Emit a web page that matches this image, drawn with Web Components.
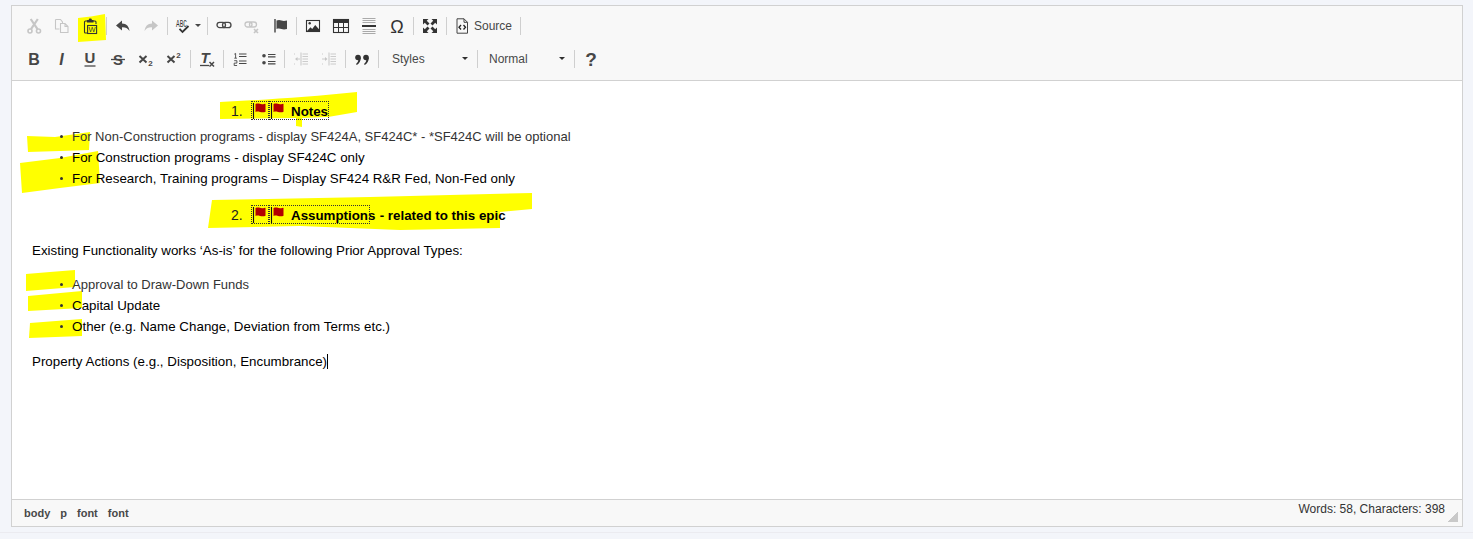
<!DOCTYPE html>
<html>
<head>
<meta charset="utf-8">
<title>Editor</title>
<style>
html, body { margin: 0; background: #f3f5fa; }
body { font-family: "Liberation Sans", Arial, sans-serif; height: 539px; overflow: hidden; }
</style>
</head>
<body>
<ck-editor>
    <ck-row slot="toolbar">
        <ck-btn icon="cut"></ck-btn>
        <ck-btn icon="copy"></ck-btn>
        <ck-btn icon="paste" marked></ck-btn>
        <ck-sep></ck-sep>
        <ck-btn icon="undo"></ck-btn>
        <ck-btn icon="redo"></ck-btn>
        <ck-sep></ck-sep>
        <ck-btn icon="spell" wide></ck-btn>
        <ck-sep></ck-sep>
        <ck-btn icon="link"></ck-btn>
        <ck-btn icon="unlink"></ck-btn>
        <ck-btn icon="anchor"></ck-btn>
        <ck-sep></ck-sep>
        <ck-btn icon="image"></ck-btn>
        <ck-btn icon="table"></ck-btn>
        <ck-btn icon="hr"></ck-btn>
        <ck-btn icon="omega"></ck-btn>
        <ck-sep></ck-sep>
        <ck-btn icon="maximize"></ck-btn>
        <ck-sep></ck-sep>
        <ck-btn icon="source" label="Source"></ck-btn>
        <ck-sep></ck-sep>
    </ck-row>
    <ck-row slot="toolbar">
        <ck-btn icon="bold"></ck-btn>
        <ck-btn icon="italic"></ck-btn>
        <ck-btn icon="underline"></ck-btn>
        <ck-btn icon="strike"></ck-btn>
        <ck-btn icon="sub"></ck-btn>
        <ck-btn icon="sup"></ck-btn>
        <ck-sep></ck-sep>
        <ck-btn icon="clear"></ck-btn>
        <ck-sep></ck-sep>
        <ck-btn icon="ol"></ck-btn>
        <ck-btn icon="ul"></ck-btn>
        <ck-sep></ck-sep>
        <ck-btn icon="outdent"></ck-btn>
        <ck-btn icon="indent"></ck-btn>
        <ck-sep></ck-sep>
        <ck-btn icon="quote"></ck-btn>
        <ck-sep></ck-sep>
        <ck-combo style="width:94px;padding-left:11px">Styles</ck-combo>
        <ck-sep></ck-sep>
        <ck-combo style="width:92px;padding-left:9px">Normal</ck-combo>
        <ck-sep></ck-sep>
        <ck-btn icon="help"></ck-btn>
    </ck-row>

    <ck-content slot="content">
        <ck-list ordered start="1" indent="220" style="margin-bottom:4px"><li><b><ck-anchor></ck-anchor><ck-anchor boxed>Notes</ck-anchor></b></li></ck-list>
        <ck-list indent="40" style="margin-bottom:16px">
            <li class="grey">For Non-Construction programs - display SF424A, SF424C* - *SF424C will be optional</li>
            <li>For Construction programs - display SF424C only</li>
            <li>For Research, Training programs – Display SF424 R&amp;R Fed, Non-Fed only</li>
        </ck-list>
        <ck-list ordered start="2" indent="220" style="margin-bottom:14px"><li><b><ck-anchor></ck-anchor><ck-anchor boxed style="--box-width:99px;--box-after:7px">Assumptions</ck-anchor> - related to this epic</b></li></ck-list>
        <ck-para style="margin-bottom:13px;letter-spacing:.015px">Existing Functionality works ‘As-is’ for the following Prior Approval Types:</ck-para>
        <ck-list indent="40" style="margin-bottom:14px">
            <li class="grey">Approval to Draw-Down Funds</li>
            <li>Capital Update</li>
            <li style="letter-spacing:.04px">Other (e.g. Name Change, Deviation from Terms etc.)</li>
        </ck-list>
        <ck-para caret style="letter-spacing:.02px">Property Actions (e.g., Disposition, Encumbrance)</ck-para>
    </ck-content>

    <ck-path slot="footer">body</ck-path>
    <ck-path slot="footer">p</ck-path>
    <ck-path slot="footer">font</ck-path>
    <ck-path slot="footer">font</ck-path>
    <span slot="count">Words: 58, Characters: 398</span>
</ck-editor>
<ck-rule></ck-rule>

<script>
//! Toolbar icons, all drawn on a 16 x 16 box
const ON = '#474747';
const OFF = '#c6c6c6';
const FONT = 'font-family="Liberation Sans" text-anchor="middle"';
const ICONS = {
    cut: `<g fill="none" stroke="${OFF}"><circle cx="4" cy="13" r="2" stroke-width="1.6"/><circle cx="12.500" cy="13" r="2" stroke-width="1.6"/><path d="M5 11.200 11.800 1M11.500 11.200 4.700 1" stroke-width="2.200"/></g>`,
    copy: `<g fill="none" stroke="${OFF}" stroke-width="1.100"><path d="M1.500 1.500h5l2 2.500v1.500M1.500 1.500v9.500h4"/><path d="M6.500 5.500h4.500l3 3v6h-7.500zM11 5.500v3h3"/></g>`,
    paste: `<g fill="none" stroke="#333" stroke-width="1.100"><path d="M5 3H3.500q-1 0-1 1v10q0 1 1 1H5M11 3h2q1 0 1 1v2"/><path d="M5.500 4V2.500h1.500L7.700 1h1.200l.7 1.500h1.400V4z" fill="#333"/><rect x="5.600" y="7.500" width="9" height="8"/></g><text x="10.100" y="14.200" ${FONT} font-size="7.500" fill="#333">W</text>`,
    undo: `<path d="M7 2.500 1 7.500l6 5V9.400c3-.2 5.600.7 7.500 3.600C14 8.500 11.500 5.600 7 5.500z" fill="${ON}"/>`,
    redo: `<path d="M9 2.500l6 5-6 5V9.400c-3-.2-5.600.7-7.500 3.600C2 8.500 4.500 5.600 9 5.500z" fill="${OFF}"/>`,
    link: `<g fill="none" stroke="${ON}" stroke-width="1.300"><rect x="1" y="4.300" width="8.500" height="5.400" rx="2.700"/><rect x="6.500" y="4.300" width="8.500" height="5.400" rx="2.700"/></g>`,
    unlink: `<g fill="none" stroke="${OFF}" stroke-width="1.300"><rect x="1" y="4" width="7" height="5" rx="2.500"/><rect x="5.500" y="4" width="7" height="5" rx="2.500"/></g><path d="M10 11l4 4m0-4-4 4" stroke="${OFF}" stroke-width="1.600"/>`,
    anchor: `<path d="M3 1v13.500" stroke="#222" stroke-width="1.200"/><path d="M4.500 2.500c2-.8 3.500-.6 5 0s3.500.5 5.500 0v8.500c-2 .5-4 .5-5.500 0s-3-.8-5 0z" fill="${ON}"/>`,
    image: `<rect x="1.500" y="2.500" width="13" height="11" fill="none" stroke="#333" stroke-width="1.100"/><circle cx="4.700" cy="5.300" r="1.200" fill="#333"/><path d="M2 13 5.500 9.300l1.700 1.700 3-4 4 4.500V13z" fill="#333"/>`,
    table: `<rect x=".5" y="1.500" width="15" height="13" fill="none" stroke="#333" stroke-width="1.100"/><rect x=".5" y="1.500" width="15" height="3.500" fill="#333"/><path d="M.5 9.500h15M5.500 5v9.500M10.500 5v9.500" stroke="#333" stroke-width="1"/>`,
    hr: `<path d="M1.500 .5h13M1.500 2.500h13M1.500 4.500h13M1.500 11.500h13M1.500 13.500h13M1.500 15.500h13" stroke="#aaa" stroke-width="1"/><path d="M1 8h14" stroke="#333" stroke-width="2"/>`,
    omega: `<text x="8" y="14.500" ${FONT} font-size="18" fill="#333">Ω</text>`,
    maximize: `<path d="M1 1h5.500L4.700 2.800 7.500 5.500 5.500 7.500 2.800 4.700 1 6.500zM15 1v5.500l-1.800-1.800L10.500 7.500 8.500 5.500l2.700-2.700L9.500 1zM1 15V9.500l1.800 1.800 2.700-2.800 2 2-2.700 2.700L6.500 15zM15 15H9.500l1.800-1.800-2.800-2.700 2-2 2.700 2.700L15 9.500z" fill="#333"/>`,
    source: `<path d="M3 .8h7l3.500 3.500v10.900H3zM10 .8v3.500h3.500" fill="none" stroke="#444" stroke-width="1"/><path d="M7 7 5 9.300 7 11.500M9.500 7l2 2.300-2 2.200" fill="none" stroke="#222" stroke-width="1.300"/>`,
    bold: `<text x="8" y="13.500" ${FONT} font-weight="700" font-size="16" fill="${ON}">B</text>`,
    italic: `<text x="7.500" y="13.500" ${FONT} font-weight="700" font-style="italic" font-size="16" fill="${ON}">I</text>`,
    underline: `<text x="8" y="12" ${FONT} font-weight="700" font-size="15" fill="${ON}">U</text><path d="M2.500 15h11" stroke="${ON}" stroke-width="1.300"/>`,
    strike: `<text x="8" y="13.500" ${FONT} font-weight="700" font-size="15" fill="${ON}">S</text><path d="M1 8.500h14" stroke="${ON}" stroke-width="1.300"/>`,
    sub: `<path d="M1.500 5 8.500 11.500M8.500 5l-7 6.500" stroke="${ON}" stroke-width="2"/><text x="12.500" y="14.500" ${FONT} font-weight="700" font-size="8" fill="${ON}">2</text>`,
    sup: `<path d="M1.500 5 8.500 11.500M8.500 5l-7 6.500" stroke="${ON}" stroke-width="2"/><text x="12.500" y="7" ${FONT} font-weight="700" font-size="8" fill="${ON}">2</text>`,
    clear: `<text x="6" y="12" ${FONT} font-weight="700" font-style="italic" font-size="15" fill="${ON}">T</text><path d="M1 14.500h9" stroke="${ON}" stroke-width="1.300"/><path d="M10.500 11l4.500 4.500M15 11l-4.500 4.500" stroke="${ON}" stroke-width="1.500"/>`,
    ol: `<path d="M2.300 3.200 3.600 2.400V7M2.300 7.200h2.600M2.200 9.700h2.700v2.400H2.200v2.400h2.900" fill="none" stroke="${ON}" stroke-width=".9"/><path d="M7 3h7.500M7 5.500h7.500M7 10h7.500M7 12.500h7.500" stroke="${ON}" stroke-width="1.200"/>`,
    ul: `<circle cx="4" cy="4.700" r="1.800" fill="${ON}"/><circle cx="4" cy="11.700" r="1.800" fill="${ON}"/><path d="M8 3.500h7.500M8 5.800h7.500M8 10.500h7.500M8 12.800h7.500" stroke="${ON}" stroke-width="1.200"/>`,
    outdent: `<path d="M8 1.500v13" stroke="${OFF}"/><path d="M9.500 3h5.500M9.500 5.500h5.500M9.500 8h5.500M9.500 10.500h5.500M9.500 13h5.500M1 3h1M1 13h1M4 8h3" stroke="${OFF}" stroke-width=".9"/><path d="M2 8l2.500-2v4z" fill="${OFF}"/>`,
    indent: `<path d="M8 1.500v13" stroke="${OFF}"/><path d="M9.500 3h5.500M9.500 5.500h5.500M9.500 8h5.500M9.500 10.500h5.500M9.500 13h5.500M1 3h1M1 13h1M1 8h3" stroke="${OFF}" stroke-width=".9"/><path d="M6.500 8 4 6v4z" fill="${OFF}"/>`,
    quote: `<g fill="#333"><circle cx="4" cy="6.500" r="2.800"/><circle cx="12" cy="6.500" r="2.800"/><path d="M6.800 6.500c0 3.500-1.500 6-4 7.500l-.8-1c1.500-1.200 2.300-2.700 2.300-4.500zM14.800 6.500c0 3.500-1.500 6-4 7.500l-.8-1c1.500-1.200 2.300-2.700 2.300-4.500z"/></g>`,
    help: `<text x="8" y="14.800" ${FONT} font-weight="700" font-size="19" fill="${ON}">?</text>`,
    spell: `<text x="1" y="9" font-family="Liberation Mono" font-size="10.500" textLength="11" lengthAdjust="spacingAndGlyphs" fill="#333">ABC</text><path d="M4.500 10.800 7.500 14 13.500 8" fill="none" stroke="#333" stroke-width="1.800"/>`
};

//! Custom element registry helper, every element gets an open shadow root
function shadowElement(name, markup, setup) {
    customElements.define(name, class extends HTMLElement {
        constructor() {
            super();
            this.attachShadow({ mode: 'open' }).innerHTML = markup;
        }
        connectedCallback() {
            if (setup) setup(this);
        }
    });
}

shadowElement('ck-editor', `
<style>
:host { display: flex; flex-direction: column; margin: 5px 10px 0 11px; box-sizing: border-box; height: 522px; border: 1px solid #d1d1d1; background: #f8f8f8; color: #000; }
.toolbar { display: flex; flex-direction: column; padding: 3px 0 5px 8px; height: 66px; border-bottom: 1px solid #d1d1d1; }
.content { flex: 1; min-height: 0; display: flex; }
.footer { height: 27px; box-sizing: border-box; border-top: 1px solid #d1d1d1; display: flex; justify-content: space-between; padding: 0 4px 0 12px; position: relative; }
.path { display: flex; gap: 10px; align-items: center; }
.count { font-size: 12px; color: #333; padding: 2px 13px 0 0; line-height: 14px; }
.grip { position: absolute; right: 4px; bottom: 4px; width: 10px; height: 10px; background: linear-gradient(135deg, transparent 50%, #c9c9c9 50%); }
</style>
<div class="toolbar"><slot name="toolbar"></slot></div>
<div class="content"><slot name="content"></slot></div>
<div class="footer">
    <div class="path"><slot name="footer"></slot></div>
    <div class="count"><slot name="count"></slot></div>
    <div class="grip"></div>
</div>`);

shadowElement('ck-rule', `
<style>:host { display: block; height: 1px; margin-top: 5px; background: #ebebf0; }</style>`);

shadowElement('ck-row', `
<style>:host { display: flex; align-items: center; height: 33px; }</style>
<slot></slot>`);

shadowElement('ck-btn', `
<style>
:host { display: flex; align-items: center; justify-content: center; position: relative; width: 28px; height: 30px; flex: none; }
:host([wide]) { width: 35px; justify-content: flex-start; padding-left: 5px; box-sizing: border-box; gap: 4px; }
:host([label]) { width: auto; padding: 0 6px 0 5px; gap: 4px; }
svg { display: block; position: relative; overflow: visible; }
.arrow { display: none; border: 3px solid transparent; border-top: 3px solid #474747; border-bottom: 0; position: relative; }
:host([wide]) .arrow { display: block; }
.label { font-size: 12px; color: #474747; }
.mark { display: none; position: absolute; left: 2px; top: 3px; }
:host([marked]) .mark { display: block; }
</style>
<svg class="mark" width="28" height="30" viewBox="0 0 28 30"><path d="M0 4 C8 3 18 2 27 0 L28 26 L0 28z" fill="#ffff00"/></svg>
<svg class="icon" width="16" height="16" viewBox="0 0 16 16"></svg>
<span class="arrow"></span>
<span class="label"></span>`, el => {
    el.shadowRoot.querySelector('.icon').innerHTML = ICONS[el.getAttribute('icon')] || '';
    el.shadowRoot.querySelector('.label').textContent = el.getAttribute('label') || '';
});

shadowElement('ck-sep', `
<style>:host { display: block; flex: none; width: 1px; height: 18px; background: #cfcfcf; margin: 0 2px; }</style>`);

shadowElement('ck-combo', `
<style>
:host { display: flex; align-items: center; justify-content: space-between; box-sizing: border-box; padding-right: 7px; height: 30px; font-size: 12px; color: #484848; flex: none; }
i { border: 3px solid transparent; border-top: 3px solid #2f2f2f; border-bottom: 0; }
</style>
<slot></slot><i></i>`);

shadowElement('ck-content', `
<style>
:host { display: block; flex: 1; background: #fff; position: relative; font: 13.33px/21px "Liberation Sans", Arial, sans-serif; color: #000; overflow: hidden; }
svg { position: absolute; left: -12px; top: -81px; }
.flow { position: relative; padding: 20px 20px 0; }
</style>
<svg width="1473" height="539" viewBox="0 0 1473 539">
    <g fill="#ffff00">
        <path d="M220 102 C260 100 310 97 357 92 L357 112 L328 117 L302 118 L302 127 L296 126 L296 118 L220 119z"/>
        <path d="M212 200 L370 197 L532 193 L532 209 L500 212 L500 228 L400 230 L300 226 L208 228z"/>
        <path d="M27 136 L55 137 L90 132 L89 150 L60 151 L28 152z"/>
        <path d="M20 163 L60 158 L98 151 L100 183 L60 188 L22 193z"/>
        <path d="M26 274 L50 272 L75 270 L75 287 L26 291z"/>
        <path d="M28 296 L82 291 L82 308 L28 311z"/>
        <path d="M30 323 L82 319 L82 336 L29 338z"/>
    </g>
</svg>
<div class="flow"><slot></slot></div>`);

shadowElement('ck-list', `
<style>
:host { display: block; }
ul, ol { margin: 0; list-style: none; }
li { position: relative; }
.grey { color: #333; font-size: 13px; }
ul li::before { content: ""; position: absolute; left: -12px; top: 9px; width: 3px; height: 3px; border-radius: 50%; background: #333; }
ol li::before { content: attr(data-n) "."; position: absolute; left: -21px; font-size: 14px; color: #222; }
</style>
<div class="wrap"></div>`, el => {
    //* Light DOM li elements get moved into a real list so the markers render
    const list = document.createElement(el.hasAttribute('ordered') ? 'ol' : 'ul');
    list.style.paddingLeft = el.getAttribute('indent') + 'px';
    el.querySelectorAll('li').forEach(li => {
        li.dataset.n = el.getAttribute('start') || '';
        list.appendChild(li);
    });
    el.shadowRoot.querySelector('.wrap').appendChild(list);
});

shadowElement('ck-para', `
<style>
:host { display: block; }
i { display: none; width: 1px; height: 15px; background: #000; vertical-align: -3px; }
:host([caret]) i { display: inline-block; }
</style>
<slot></slot><i></i>`);

//* No whitespace after the style tag, the host is inline so it would show as a space
shadowElement('ck-anchor', `<style>
:host { display: inline; }
:host(:not([boxed])) .box { margin-right: 2px; width: 16px; }
.box { display: inline-block; height: 17px; line-height: 19px; width: var(--box-width, auto); margin-right: var(--box-after, 0); white-space: nowrap; outline: 1px dotted #333; }
svg { vertical-align: -2px; overflow: visible; }
.txt { margin-left: 5px; }
:host(:not([boxed])) .txt { display: none; }
</style><span class="box"><svg width="16" height="16" viewBox="0 0 16 16"><path d="M1.500 1v16" stroke="#111" stroke-width="1.100"/><path d="M3.500 2c3-1 4.500.3 6.500.3s2.500-.3 3.500-.5v8c-1.500.7-3.500.6-5.500.1s-3-.4-4.500 0z" fill="#b30000"/></svg><span class="txt"><slot></slot></span></span>`);

shadowElement('ck-path', `
<style>:host { display: block; font-size: 11px; font-weight: 700; color: #484848; }</style>
<slot></slot>`);
</script>
</body>
</html>
